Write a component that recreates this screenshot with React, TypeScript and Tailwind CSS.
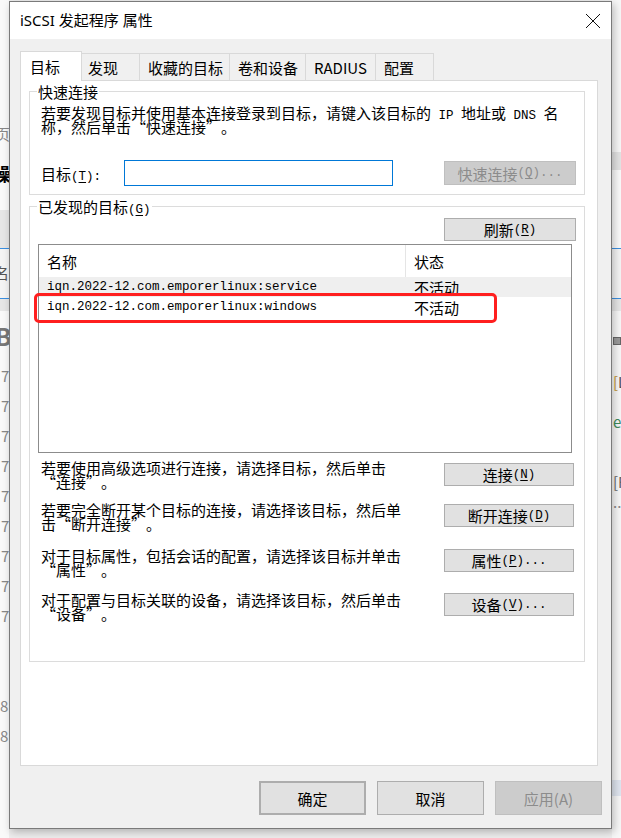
import React from 'react';

const mono = "font-['Liberation_Mono',monospace] text-[12.5px]";

function M({ children }: { children: React.ReactNode }) {
  return <span className={`${mono} leading-[0px]`}>{children}</span>;
}

function K({ children }: { children: React.ReactNode }) {
  return <u className="underline-offset-[2px]">{children}</u>;
}

// full-width curly quotes, the way the dialog font draws them
function Lq() {
  return <span className="inline-block w-[15px] text-right">“</span>;
}
function Rq() {
  return <span className="inline-block w-[15px] text-left">”</span>;
}

function Btn({
  children,
  className = '',
  disabled = false,
}: {
  children: React.ReactNode;
  className?: string;
  disabled?: boolean;
}) {
  return (
    <button
      className={`flex shrink-0 items-center justify-center border text-[15px] leading-none ${
        disabled ? 'border-[#bfbfbf] bg-[#cccccc] text-[#8c8c8c]' : 'border-[#adadad] bg-[#e1e1e1] text-black'
      } ${className}`}
    >
      {children}
    </button>
  );
}

function Group({ label, className = '', children }: { label: React.ReactNode; className?: string; children: React.ReactNode }) {
  return (
    <div className={`flex w-[556px] flex-col border border-[#dcdcdc] ${className}`}>
      <span className="-mt-[8px] ml-[7px] w-fit bg-white px-[1px] text-[15px] leading-[15px]">{label}</span>
      {children}
    </div>
  );
}

const tabs = [
  { label: '发现', cls: 'w-[58px] pl-[6px]' },
  { label: '收藏的目标', cls: 'w-[90px] pl-[8px]' },
  { label: '卷和设备', cls: 'w-[76px] pl-[8px]' },
  { label: 'RADIUS', cls: 'w-[70px] pl-[8px]' },
  { label: '配置', cls: 'w-[58px] pl-[8px]' },
];

const helpRows = [
  {
    l1: '若要使用高级选项进行连接，请选择目标，然后单击',
    l2: <><Lq />连接<Rq />。</>,
    btn: <>连接<M>(<K>N</K>)</M></>,
    row: 'mt-[8px]',
    b: 'mt-[2px]',
  },
  {
    l1: '若要完全断开某个目标的连接，请选择该目标，然后单',
    l2: <>击<Lq />断开连接<Rq />。</>,
    btn: <>断开连接<M>(<K>D</K>)</M></>,
    row: 'mt-[14px]',
    b: 'mt-[1px]',
  },
  {
    l1: '对于目标属性，包括会话的配置，请选择该目标并单击',
    l2: <><Lq />属性<Rq />。</>,
    btn: <>属性<M>(<K>P</K>)...</M></>,
    row: 'mt-[18px]',
    b: 'mt-0',
  },
  {
    l1: '对于配置与目标关联的设备，请选择该目标，然后单击',
    l2: <><Lq />设备<Rq />。</>,
    btn: <>设备<M>(<K>V</K>)...</M></>,
    row: 'mt-[16px]',
    b: 'mt-0',
  },
];

function LeftStrip() {
  const digits = ['7', '7', '7', '7', '7', '7', '7', '7', '7'];
  return (
    <div className="flex w-[9px] shrink-0 flex-col overflow-hidden bg-[#f9f9f9] text-[#555]">
      <div className="h-[120px] shrink-0" />
      <div className="-ml-[5px] flex h-[28px] shrink-0 items-center text-[15px] text-[#888]">页</div>
      <div className="-ml-[7px] flex h-[50px] shrink-0 items-center text-[18px] font-bold text-black">操</div>
      <div className="h-[12px] shrink-0" />
      <div className="h-[38px] shrink-0 bg-[#e6e6e6]" />
      <div className="h-px shrink-0 bg-[#3b8fe0]" />
      <div className="-ml-[6px] flex h-[49px] shrink-0 items-center bg-[#f4f4f4] text-[15px]">名</div>
      <div className="h-px shrink-0 bg-[#3b8fe0]" />
      <div className="h-[12px] shrink-0 bg-[#e6e6e6]" />
      <div className="-ml-[5px] flex h-[50px] shrink-0 items-center text-[24px] font-bold text-[#777]">B</div>
      <div className="flex shrink-0 flex-col text-[15px] text-[#888]">
        {digits.map((d, i) => (
          <div key={i} className="flex h-[30px] items-center pl-[1px]">
            {d}
          </div>
        ))}
      </div>
      <div className="h-[60px] shrink-0" />
      <div className="flex h-[30px] shrink-0 items-center text-[15px] text-[#888]">8</div>
      <div className="flex h-[30px] shrink-0 items-center text-[15px] text-[#888]">8</div>
    </div>
  );
}

function RightStrip() {
  return (
    <div className="flex w-[9px] shrink-0 flex-col overflow-hidden bg-[#f7f7f7] text-[15px]">
      <div className="h-[152px] shrink-0" />
      <div className="h-[18px] shrink-0 bg-[#e3e3e3]" />
      <div className="h-[78px] shrink-0 bg-[#fafafa]" />
      <div className="h-px shrink-0 bg-[#3b8fe0]" />
      <div className="h-[49px] shrink-0 bg-[#f4f4f4]" />
      <div className="h-px shrink-0 bg-[#3b8fe0]" />
      <div className="h-[12px] shrink-0 bg-[#e6e6e6]" />
      <div className="h-[26px] shrink-0" />
      <div className="ml-[1px] h-[8px] w-[8px] shrink-0 border border-[#666] bg-[#999]" />
      <div className="h-[24px] shrink-0" />
      <div className="flex h-[26px] shrink-0 items-center pl-[1px]">
        <span className="text-[#c0922f]">[</span>
        <span className="text-[#555]">L</span>
      </div>
      <div className="h-[14px] shrink-0" />
      <div className="flex h-[26px] shrink-0 items-center pl-[1px] text-[#3d8b5a]">ev</div>
      <div className="h-[34px] shrink-0" />
      <div className="flex h-[26px] shrink-0 items-center pl-[1px] text-[#666]">[F</div>
      <div className="flex h-[14px] shrink-0 items-center pl-[1px] text-[#888]">..</div>
      <div className="h-[271px] shrink-0" />
      <div className="h-[16px] shrink-0 bg-[#dfe5ef]" />
    </div>
  );
}

export default function App() {
  return (
    <div className="flex h-[838px] w-[621px] overflow-hidden bg-[#eeeeee] font-['Noto_Sans_CJK_SC',sans-serif] text-black">
      <LeftStrip />

      {/* dialog window */}
      <div className="relative z-10 mt-[1px] flex h-[828px] w-[603px] shrink-0 flex-col border border-[#7a7a7a] bg-[#f0f0f0] shadow-[2px_3px_8px_rgba(0,0,0,0.25)]">
        {/* title bar */}
        <div className="flex h-[37px] shrink-0 items-center justify-between bg-white pl-[10px] pr-[10px]">
          <span className="font-['Noto_Sans','Noto_Sans_CJK_SC',sans-serif] text-[15px] leading-none">iSCSI 发起程序 属性</span>
          <svg width="16" height="16" viewBox="0 0 16 16">
            <path d="M1 1 L15 15 M15 1 L1 15" stroke="#111" strokeWidth="1" fill="none" />
          </svg>
        </div>

        <div className="flex flex-1 flex-col pl-[10px] pr-[13px] pt-[12px]">
          {/* tab strip */}
          <div className="flex h-[29px] items-end">
            <div className="relative z-10 -mb-px flex h-[30px] w-[62px] items-center border border-b-0 border-[#d9d9d9] bg-white pl-[9px] text-[15px] leading-none">
              目标
            </div>
            {tabs.map((t) => (
              <div
                key={t.label}
                className={`flex h-[27px] items-center border border-l-0 border-b-0 border-[#d9d9d9] bg-[#f0f0f0] text-[15px] leading-none ${t.cls}`}
              >
                {t.label}
              </div>
            ))}
          </div>

          {/* tab panel */}
          <div className="flex h-[686px] flex-col border border-[#d9d9d9] bg-white pl-[8px] pt-[10px]">
            <Group label="快速连接">
              <div className="flex flex-col pb-[8px] pl-[11px] pr-[8px]">
                <p className="mt-[7px] text-[15px] leading-[14px]">
                  若要发现目标并使用基本连接登录到目标，请键入该目标的<M> IP </M>地址或<M> DNS </M>名
                  <br />
                  称，然后单击<Lq />快速连接<Rq />。
                </p>
                <div className="mt-[26px] flex items-center">
                  <span className="w-[83px] text-[15px] leading-none">
                    目标<M>(<K>T</K>):</M>
                  </span>
                  <div className="h-[26px] w-[269px] border border-[#0078d7] bg-white" />
                  <Btn disabled className="ml-auto h-[24px] w-[132px]">
                    快速连接<M>(<K>Q</K>)...</M>
                  </Btn>
                </div>
              </div>
            </Group>

            <Group label={<>已发现的目标<M>(<K>G</K>)</M></>} className="mt-[11px]">
              <div className="flex flex-col pb-[40px] pl-[8px] pr-[8px]">
                <Btn className="mt-[4px] h-[23px] w-[132px] self-end">
                  刷新<M>(<K>R</K>)</M>
                </Btn>

                {/* list view */}
                <div className="mt-[3px] flex h-[209px] w-[534px] flex-col border border-[#8c8c8c] bg-white">
                  <div className="flex h-[32px] shrink-0 text-[15px] leading-none">
                    <div className="flex w-[367px] items-center border-r border-[#e5e5e5] pl-[8px]">名称</div>
                    <div className="flex items-center pl-[8px]">状态</div>
                  </div>
                  <div className="flex h-[20px] shrink-0 items-center bg-[#efefef]">
                    <span className={`w-[367px] pl-[8px] ${mono}`}>iqn.2022-12.com.emporerlinux:service</span>
                    <span className="pl-[8px] text-[15px] leading-none">不活动</span>
                  </div>
                  <div className="relative flex h-[20px] shrink-0 items-center">
                    <span className={`w-[367px] pl-[8px] ${mono}`}>iqn.2022-12.com.emporerlinux:windows</span>
                    <span className="pl-[8px] text-[15px] leading-none">不活动</span>
                    <div className="absolute -left-[5px] -top-[4px] h-[30px] w-[463px] rounded-[5px] border-[3px] border-[#ff1f1f]" />
                  </div>
                </div>

                {helpRows.map((r, i) => (
                  <div key={i} className={`flex items-start justify-between ${r.row}`}>
                    <p className="ml-[3px] text-[15px] leading-[14px]">
                      {r.l1}
                      <br />
                      {r.l2}
                    </p>
                    <Btn className={`mr-[2px] h-[23px] w-[130px] ${r.b}`}>{r.btn}</Btn>
                  </div>
                ))}
              </div>
            </Group>
          </div>

          {/* dialog buttons */}
          <div className="mr-[-4px] mt-[15px] flex justify-end gap-[11px]">
            <Btn className="h-[34px] w-[107px] border-2 border-[#0078d7]">确定</Btn>
            <Btn className="h-[34px] w-[107px]">取消</Btn>
            <Btn disabled className="h-[34px] w-[107px]">
              应用(A)
            </Btn>
          </div>
        </div>
      </div>

      <RightStrip />
    </div>
  );
}
